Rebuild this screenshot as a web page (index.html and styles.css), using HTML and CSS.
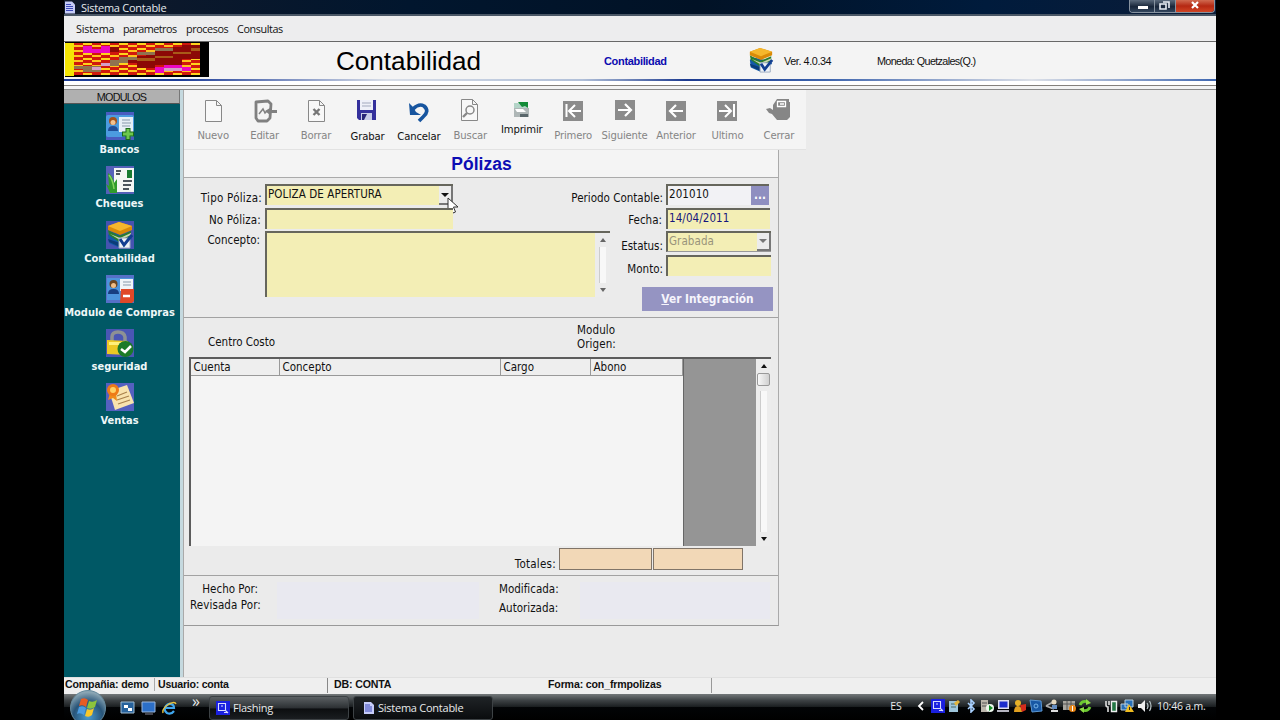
FILE: index.html
```html
<!DOCTYPE html>
<html lang="es">
<head>
<meta charset="utf-8">
<title>Sistema Contable</title>
<link rel="stylesheet" href="styles.css">
</head>
<body>
<svg class="defs" width="0" height="0">
  <defs>
    <pattern id="weave" width="18" height="5" patternUnits="userSpaceOnUse">
      <rect width="18" height="5" fill="#d0180c"/>
      <rect width="9" height="2" y="1" fill="#ffd21c"/>
      <rect x="9" width="9" height="2" y="3" fill="#ffc21c"/>
    </pattern>
    <symbol id="books" viewBox="0 0 28 28">
      <path d="M2 14l3-3 18 4 3 3-12 9L3 22z" fill="#1259a8"/>
      <path d="M2 18l12 4 11-7v3l-11 8L3 21z" fill="#0b3c78"/>
      <path d="M2 9l11 6 12-5v5l-12 6L3 14z" fill="#287c30"/>
      <path d="M4 13l10 4 11-5v2l-11 5z" fill="#cfd8b0"/>
      <path d="M2 5l11-4 13 4v4l-12 5L2 9z" fill="#d98a08"/>
      <path d="M2 5l11-4 13 4-12 5z" fill="#f5b72c"/>
      <path d="M13 17h11v10H13z" fill="#eef2f7" stroke="#9cabc0"/>
      <path d="M14 18l4 6 8-10" fill="none" stroke="#123f91" stroke-width="3"/>
    </symbol>
    <symbol id="doc" viewBox="0 0 12 12">
      <path d="M1 0h7l3 3v9H1z" fill="#c6ccf8"/>
      <path d="M2 3h5M2 5h7M2 7h7M2 9h7" stroke="#3c48b8"/>
    </symbol>
    <symbol id="flash" viewBox="0 0 14 14">
      <path d="M0 0h14v14H0z" fill="#1a20e0"/>
      <path d="M2.500 2.500h7v7h-7zM9 9l3 3M8 11.500h4M5 5h2" fill="none" stroke="#d8dcff" stroke-width="1.100"/>
    </symbol>
  </defs>
</svg>
<div class="screen">
  <header class="titlebar">
    <svg class="app-icon" width="12" height="13"><use href="#doc" width="12" height="13"/></svg>
    <span class="t-title">Sistema Contable</span>
    <div class="winbtns">
      <svg width="25" height="12" class="wb"><path d="M8 6h10v3H8z" fill="#fff"/></svg>
      <svg width="21" height="12" class="wb"><path d="M8 2h6v6M5 4h6v5H5z" fill="none" stroke="#e8edf4" stroke-width="1.600"/></svg>
      <svg width="38" height="12" class="wb close"><path d="M16 2l6 6M22 2l-6 6" stroke="#fff" stroke-width="2.200"/></svg>
    </div>
  </header>
  <nav class="menu"><span class="m1">Sistema</span><span class="m2">parametros</span><span class="m3">procesos</span><span class="m4">Consultas</span></nav>
  <section class="banner">
    <svg class="logo" width="144" height="35" shape-rendering="crispEdges">
      <path d="M0 0h144v35H0z" fill="#000"/>
      <path d="M0 1h9v33H0z" fill="#f4e404"/>
      <path d="M9 1h126v32H9z" fill="url(#weave)"/>
      <path d="M135 3v14h-18v6H90v3H72v-5h-9v-3h9v-4h9v-3h9V8h18V5h9V3z" fill="#8c0806"/>
      <path d="M9 24h18v3H9zM18 27h18v3H18zM27 24h9v3h-9zM36 21h18v3H36zM45 18h18v3H45zM54 15h18v3H54zM72 10h18v3H72zM90 6h18v3H90z" fill="#8f7350"/>
      <path d="M108 12h18V9h9V6h-9v4h-18v4H90v2H72v3h18v-3h18z" fill="#a85a18"/>
      <path d="M18 4h9v7h-9zM27 7h9v4h-9zM36 4h9v7h-9zM90 25h9v6h-9zM99 23h18v3H99zM117 25h9v4h-9z" fill="#ec08c0"/>
      <path d="M45 5h9v5h-9z" fill="#8c0806"/>
      <path d="M99 26h18v3H99zM36 21h9v3h-9zM27 25h9v3h-9z" fill="#d4a0c8"/>
    </svg>
    <span class="app-name">Contabilidad</span>
    <span class="module">Contabilidad</span>
    <svg class="banner-icon" width="26" height="28"><use href="#books" width="26" height="28"/></svg>
    <span class="ver">Ver. 4.0.34</span>
    <span class="coin">Moneda: Quetzales(Q.)</span>
  </section>
  <div class="rule"></div>
  <main class="main">
    <aside class="side">
      <div class="side-head">MODULOS</div>
      <div class="side-list">
        <div class="mod">
          <svg width="28" height="28" viewBox="0 0 28 28"><path d="M0 0h28v28H0z" fill="#4a5cc0"/><rect y="3" width="28" height="22" rx="2" fill="#4c9be0"/><path d="M13 5h14v15H13z" fill="#e6eff6"/><path d="M16 8h8M16 11h9M16 14h8" stroke="#8899ab"/><circle cx="7" cy="9" r="4" fill="#a4531c"/><circle cx="7" cy="10.500" r="2.500" fill="#f2c391"/><path d="M2 19q0-5 5-5t5 5z" fill="#204e98"/><path d="M22 16v12M16 22h12" stroke="#1a6a18" stroke-width="5"/><path d="M22 17v10M17 22h10" stroke="#6dc84c" stroke-width="3"/></svg>
          <span>Bancos</span></div>
        <div class="mod">
          <svg width="28" height="28" viewBox="0 0 28 28"><path d="M0 0h28v28H0z" fill="#5560b8"/><path d="M8 2h20v24H8z" fill="#f4f6f4"/><path d="M21 4h5v8h-5z" fill="#187a30"/><path d="M10 5h5M10 8h4M17 15h9M17 19h8M17 23h6" stroke="#4c555c" stroke-width="1.800"/><path d="M2 7q5 3 6 10l3-4v14H4L0 18l3 2z" fill="#319b2c"/><path d="M3 9q4 5 5 14" fill="none" stroke="#83d35c" stroke-width="1.500"/></svg>
          <span>Cheques</span></div>
        <div class="mod">
          <svg width="28" height="28" viewBox="0 0 28 28"><path d="M0 0h28v28H0z" fill="#4653b0"/><use href="#books" width="28" height="28"/></svg>
          <span>Contabilidad</span></div>
        <div class="mod">
          <svg width="28" height="28" viewBox="0 0 28 28"><path d="M0 0h28v28H0z" fill="#5570c8"/><path d="M1 3h26v22H1z" fill="#4c94dc"/><path d="M14 4h13v12H14z" fill="#f0f4f8"/><path d="M17 7h8M17 10h8" stroke="#8899ab"/><circle cx="7.500" cy="9" r="4" fill="#6c4520"/><circle cx="7.500" cy="10.500" r="2.500" fill="#f0bd86"/><path d="M2 19q0-5 5.500-5t5.500 5z" fill="#173e80"/><path d="M15 14h13v12l-2 2H14z" fill="#e04828"/><path d="M17 21h7" stroke="#fff" stroke-width="2.500"/></svg>
          <span>Modulo de Compras</span></div>
        <div class="mod">
          <svg width="28" height="28" viewBox="0 0 28 28"><path d="M0 0h28v28H0z" fill="#4a56b4"/><path d="M6 14V8q0-5 6-5t7 5v6" fill="none" stroke="#8d9194" stroke-width="3.500"/><path d="M1 11l21 1v14L1 25z" fill="#ecc824"/><path d="M3 13h12v3H3z" fill="#fff07a"/><circle cx="19.500" cy="20" r="8" fill="#1c7a28"/><path d="M15 20l4 3 6-6" fill="none" stroke="#fff" stroke-width="2.500"/></svg>
          <span>seguridad</span></div>
        <div class="mod">
          <svg width="28" height="28" viewBox="0 0 28 28"><path d="M0 0h28v28H0z" fill="#5560c0"/><path d="M3 8l18-6 7 18-19 7z" fill="#f8e3ae"/><path d="M11 13l10-4M11 17l12-4M12 21l12-4" stroke="#a9824c" stroke-width="1.300"/><path d="M4 10L2 17l5-2 4 3-1-8z" fill="#ef8b1c"/><circle cx="7" cy="7" r="6" fill="#ee7a18"/><circle cx="7" cy="7" r="3" fill="#ffd166"/></svg>
          <span>Ventas</span></div>
      </div>
    </aside>
    <div class="work">
      <div class="toolbar">
        <div class="tool"><svg width="28" height="28" viewBox="0 0 28 28"><path d="M6.500 3.500h11l5 5v16h-16zM17.500 3.500v5h5" fill="#f8f8f8" stroke="#888"/></svg><span>Nuevo</span></div>
        <div class="tool"><svg width="28" height="28" viewBox="0 0 28 28"><path d="M5 5l12-1 3 3-1 14-3 3H7l-2-3z" fill="none" stroke="#808080" stroke-width="2.800" stroke-linejoin="round"/><path d="M8 17l4-5 2 4 2-2" fill="none" stroke="#808080" stroke-width="1.500"/><path d="M14 14l5-3v2h7v3h-7v2z" fill="#808080"/></svg><span>Editar</span></div>
        <div class="tool"><svg width="28" height="28" viewBox="0 0 28 28"><path d="M6.500 3.500h11l5 5v16h-16zM17.500 3.500v5h5" fill="#f8f8f8" stroke="#888"/><path d="M11.500 12l6 6M17.500 12l-6 6" stroke="#777" stroke-width="2.400"/></svg><span>Borrar</span></div>
        <div class="tool on low"><svg width="28" height="28" viewBox="0 0 28 28"><path d="M4 3h19v20H6l-2-2z" fill="#34309c"/><path d="M7 3h13v10H7z" fill="#eef0f8"/><path d="M9 6h9M9 9h9" stroke="#a2a9bd"/><path d="M8 16h11v7H8z" fill="#c8cce8"/><path d="M9 17h5l-3 6H9z" fill="#262377"/></svg><span>Grabar</span></div>
        <div class="tool on low"><svg width="28" height="28" viewBox="0 0 28 28"><path d="M8 12q6-6 11-3 6 5-1 11l-4 4" fill="none" stroke="#17559f" stroke-width="3.600"/><path d="M4 6l1 12h11l-5-3-3-5z" fill="#17559f"/></svg><span>Cancelar</span></div>
        <div class="tool"><svg width="28" height="28" viewBox="0 0 28 28"><path d="M5.500 2.500h11l5 5v16h-16zM16.500 2.500v5h5" fill="#f8f8f8" stroke="#888"/><circle cx="14" cy="13" r="4" fill="none" stroke="#888" stroke-width="1.500"/><path d="M11 16l-4 4" stroke="#888" stroke-width="2.400"/></svg><span>Buscar</span></div>
        <div class="tool on print"><svg width="28" height="28" viewBox="0 0 28 28"><path d="M6 6h13v6H6z" fill="#b4d4c8"/><path d="M10 5h10v6l-3-2-3 1z" fill="#138b38"/><path d="M6 11h15v9H6z" fill="#aeb6b6"/><path d="M7 12h8l3 3H9z" fill="#fff"/><path d="M12 17h8v3h-8z" fill="#59666a"/></svg><span>Imprimir</span></div>
        <div class="tool"><svg width="28" height="28" viewBox="0 0 28 28"><path d="M4 4h20v20H4z" fill="#8b8b8b"/><path d="M7.500 7v13M22 14H11M16 8l-6 6 6 6" fill="none" stroke="#fff" stroke-width="2"/></svg><span>Primero</span></div>
        <div class="tool"><svg width="28" height="28" viewBox="0 0 28 28"><path d="M4 3h20v20H4z" fill="#8b8b8b"/><path d="M7 13h12M14 7l6 6-6 6" fill="none" stroke="#fff" stroke-width="2.200"/></svg><span>Siguiente</span></div>
        <div class="tool"><svg width="28" height="28" viewBox="0 0 28 28"><path d="M4 4h20v20H4z" fill="#8b8b8b"/><path d="M21 14H9M14 8l-6 6 6 6" fill="none" stroke="#fff" stroke-width="2.200"/></svg><span>Anterior</span></div>
        <div class="tool"><svg width="28" height="28" viewBox="0 0 28 28"><path d="M4 4h20v20H4z" fill="#8b8b8b"/><path d="M21 7v13M6 14h11M12 8l6 6-6 6" fill="none" stroke="#fff" stroke-width="2"/></svg><span>Ultimo</span></div>
        <div class="tool"><svg width="28" height="28" viewBox="0 0 28 28"><path d="M1 12l4-1 3 2V8l4-6h12v3h1v15l-3 3H12l-5-6-3-1z" fill="#868686"/><path d="M12.500 4.500h8v5h-8zM15 7h4" fill="none" stroke="#fff" stroke-width="1.300"/></svg><span>Cerrar</span></div>
      </div>
      <div class="form">
        <h1 class="form-title">Pólizas</h1>
        <div class="fields">
          <label class="l-tipo">Tipo Póliza:</label>
          <div class="inp tipo"><span>POLIZA DE APERTURA</span><i class="drop"></i>
            <svg class="cursor" width="12" height="18" viewBox="0 0 12 18"><path d="M1 1v13l3-3 2 5 2.500-1L6.500 10H11z" fill="#fff" stroke="#333"/></svg>
          </div>
          <label class="l-no">No Póliza:</label>
          <div class="inp no"></div>
          <label class="l-con">Concepto:</label>
          <div class="inp con"><div class="sbar"><i class="up"></i><b></b><i class="down"></i></div></div>
          <label class="l-per">Periodo Contable:</label>
          <div class="inp per"><span>201010</span><i class="dots">...</i></div>
          <label class="l-fec">Fecha:</label>
          <div class="inp fec"><span>14/04/2011</span></div>
          <label class="l-est">Estatus:</label>
          <div class="inp est"><span>Grabada</span><i class="drop"></i></div>
          <label class="l-mon">Monto:</label>
          <div class="inp mon"></div>
          <button class="ver-int"><u>V</u>er Integración</button>
        </div>
        <div class="detail">
          <div class="detail-head"><span class="cc">Centro Costo</span><span class="mo">Modulo<br>Origen:</span></div>
          <div class="grid">
            <div class="sheet">
              <div class="cols"><span>Cuenta</span><span>Concepto</span><span>Cargo</span><span>Abono</span></div>
            </div>
            <div class="void"></div>
            <div class="sbar big"><i class="up"></i><em></em><b></b><i class="down"></i></div>
          </div>
          <div class="totals"><span>Totales:</span><div class="tot"></div><div class="tot t2"></div></div>
        </div>
        <div class="sign">
          <span class="s1">Hecho Por:</span><div class="v1"></div><span class="s2">Modificada:</span><div class="v2"></div>
          <span class="s3">Revisada Por:</span><span class="s4">Autorizada:</span>
        </div>
      </div>
    </div>
  </main>
  <div class="status"><span class="st1">Compañia: demo</span><span class="st2">Usuario: conta</span><span class="st3">DB: CONTA</span><span class="st4">Forma: con_frmpolizas</span></div>
  <footer class="taskbar">
    <svg class="orb" width="38" height="32" viewBox="0 0 38 32">
      <defs><radialGradient id="orbfill" cx=".5" cy=".75" r=".7"><stop offset="0" stop-color="#4a9cd0"/><stop offset=".6" stop-color="#285478"/><stop offset="1" stop-color="#8ba6b4"/></radialGradient></defs>
      <circle cx="19" cy="18" r="17.500" fill="url(#orbfill)" stroke="#65899c"/>
      <path d="M12 9q4-2 7 1l-2 7q-3-3-7-1z" fill="#e85c24"/><path d="M20 11q4 2 8-1l-2 7q-4 3-8 1z" fill="#8cc43c"/>
      <path d="M10 17q4-2 7 1l-2 7q-4-3-7-1z" fill="#4c9be0"/><path d="M18 19q4 2 7-1l-2 7q-3 3-7 1z" fill="#fac829"/>
    </svg>
    <div class="quick">
      <svg width="15" height="14"><path d="M1 1h13v11H1z" fill="#27629c" stroke="#a0bdd4"/><path d="M4 4h4v3H4zM8 7h4v3H8z" fill="#fff"/></svg>
      <svg width="15" height="14"><path d="M1 1h13v10H1z" fill="#2c6fc8" stroke="#9cb8dc"/><path d="M4 13h8" stroke="#889"/></svg>
      <svg width="15" height="14"><path d="M12 10q-3 4-7 2-4-3-1-7 3-4 7-1 1 1 1 3H4" fill="none" stroke="#40a7ee" stroke-width="2.200"/><path d="M1 12Q0 7 7 3q6-3 7 0" fill="none" stroke="#e9c23e" stroke-width="1.400"/></svg>
    </div>
    <span class="more">»</span>
    <div class="task"><svg width="14" height="14"><use href="#flash" width="14" height="14"/></svg><span class="tk1">Flashing</span></div>
    <div class="task active"><svg width="12" height="14"><use href="#doc" width="12" height="14"/></svg><span class="tk2">Sistema Contable</span></div>
    <div class="tray">
      <span class="lang">ES</span>
      <svg class="chev" width="8" height="10"><path d="M6 1L2 5l4 4" fill="none" stroke="#fff" stroke-width="1.800"/></svg>
      <svg width="14" height="14"><use href="#flash" width="14" height="14"/></svg>
      <svg width="14" height="14"><path d="M2 2h9v11H2z" fill="#9ec6dc"/><path d="M4 5h5M4 8h5" stroke="#466"/><path d="M7 4l4-3 2 2-4 4z" fill="#e2b53c"/></svg>
      <svg width="14" height="14"><path d="M4 4l6 6-3 3V1l3 3-6 6" fill="none" stroke="#a8d0ff" stroke-width="1.600"/></svg>
      <svg width="14" height="14"><path d="M1 1h7v12H1z" fill="#bbb5ab"/><path d="M2 4h5M2 7h5" stroke="#555"/><circle cx="10" cy="9" r="4" fill="#eef8ee"/><path d="M9 6l4 3-4 3z" fill="#168c28"/></svg>
      <svg width="14" height="14"><path d="M2 1h11v9H2z" fill="#dde"/><path d="M3.500 2.500h8v6h-8z" fill="#1c2ccc"/><path d="M1 11h12v2H1z" fill="#b5b5c0"/></svg>
      <svg width="14" height="14"><path d="M1 13q0-6 4-6t4 6z" fill="#e0a020"/><circle cx="5" cy="4" r="3" fill="#e6b128"/><path d="M7 6l6-1v6l-4 2z" fill="#d42c1c"/></svg>
      <svg width="14" height="14"><path d="M1 1l11 1 1 10-10 1z" fill="#1858a4" stroke="#5c98d4"/><circle cx="7" cy="7" r="2" fill="none" stroke="#75b4e8"/></svg>
      <svg width="14" height="14"><path d="M1 7l7-4M1 7l8 3" stroke="#aaa" stroke-width="1.800"/><circle cx="9" cy="3" r="2.500" fill="#e6d9c0"/><path d="M7 6h5v4H7z" fill="#648cc0"/><path d="M6 12h7" stroke="#ddd" stroke-width="2"/></svg>
      <svg width="14" height="14"><path d="M1 2h12v9H1z" fill="#a8a59f"/><path d="M1 5h12M5 2v9M9 2v9" stroke="#555"/><circle cx="10.500" cy="9.500" r="3.500" fill="#e88414"/><path d="M10.500 7v5" stroke="#fff"/></svg>
      <svg width="14" height="14"><path d="M2 6q2-5 8-3M12 8q-2 5-8 3" fill="none" stroke="#6cc832" stroke-width="2.800"/><path d="M8 0l5 4-5 2zM6 14l-5-4 5-2z" fill="#8edc45"/></svg>
      <svg class="gap" width="14" height="14"><path d="M2 2v4q0 2 2 2v5M5 2v4" fill="none" stroke="#ddd" stroke-width="1.600"/><path d="M7.500 2.500h5v10h-5z" fill="#274" stroke="#eee" stroke-width="1.400"/></svg>
      <svg width="14" height="14"><path d="M5 1h8v7H5zM1 5h7v6H1z" fill="#276fb8" stroke="#b8cedd"/><path d="M9 5l5 8H5z" fill="#f0bd20"/><path d="M9.500 8v3" stroke="#222"/></svg>
      <svg width="16" height="14"><path d="M1 5h3l4-4v12L4 9H1z" fill="#eee"/><path d="M10 4q2 3 0 6M12.500 2q3 5 0 10" fill="none" stroke="#b8c4c8" stroke-width="1.200"/></svg>
      <span class="clock">10:46 a.m.</span>
    </div>
  </footer>
</div>
</body>
</html>
```
FILE: styles.css
```css
* { box-sizing: border-box; }
body { margin: 0; background: #000; overflow: hidden; }
.defs { position: absolute; }
svg { display: block; flex: none; }
.screen {
  width: 1152px; height: 720px; margin-left: 64px;
  display: flex; flex-direction: column;
  background: #ebebeb; color: #111;
  font: 11.500px/14px "DejaVu Sans Condensed", "DejaVu Sans", sans-serif;
  font-stretch: condensed;
  white-space: nowrap; overflow: hidden;
}
.titlebar {
  flex: none; height: 16px; display: flex; align-items: flex-start;
  background: linear-gradient(90deg, #10192a, #01162e 30%, #011226 55%, #001b3c 80%, #0a1c38);
  border-bottom: 2px solid #4a5766; color: #e6eaee;
}
.app-icon { margin: 1px 0 0 0; }
.t-title { margin-left: 5px; font: 11px/15px "Open Sans", sans-serif; letter-spacing: -.25px; }
.winbtns { margin-left: auto; margin-right: 1px; display: flex; border: 1px solid #8793a0; border-top: 0; border-radius: 0 0 4px 4px; overflow: hidden; }
.wb { background: linear-gradient(#5b6a7c, #18263a 55%, #33465d); border-right: 1px solid #8793a0; }
.wb.close { background: linear-gradient(#d06a50, #b52812 50%, #d04524); border: 0; }
.menu {
  flex: none; height: 26px; display: flex; padding: 5px 0 0 12px; background: #ededee;
  border-bottom: 1px solid #686868; font: 10.800px/16px "Open Sans", sans-serif; letter-spacing: -.4px;
}
.m1 { width: 47px; letter-spacing: -.2px; } .m2 { width: 63px; letter-spacing: -.55px; } .m3 { width: 51px; }
.banner { flex: none; height: 36px; display: flex; background: #f4f4f4; align-items: flex-start; }
.logo { margin-left: 1px; width: 144px; }
.app-name { margin: 2px 0 0 127px; width: 268px; font: 26.100px/34px "Liberation Sans", sans-serif; color: #000; }
.module { margin-top: 12px; width: 144px; font: bold 11px/14px "Liberation Sans", sans-serif; letter-spacing: -.33px; color: #0b0bb0; }
.banner-icon { margin-top: 4px; }
.ver { margin: 12px 0 0 10px; width: 93px; font: 10.800px/14px "Liberation Sans", sans-serif; letter-spacing: -.4px; }
.coin { margin-top: 12px; font: 10.800px/14px "Liberation Sans", sans-serif; letter-spacing: -.65px; }
.rule {
  flex: none; height: 12px; border-bottom: 1px solid #8a8a8a;
  background:
    linear-gradient(#84807c, #84807c) 0 7px / 100% 1px no-repeat,
    linear-gradient(#fff, #fff) 0 3px / 100% 4px no-repeat,
    linear-gradient(90deg, #1c3c98, #1c3c98 10%, #d8dee8 28%, #b0bfd8 45%, #1d3b90 54%, #3b62ac 66%, #dce0e8 84%, #3f67b0) 0 1px / 100% 2px no-repeat,
    #f4f4f4;
}
.main { flex: 1; display: flex; min-height: 0; }
.side { width: 116px; display: flex; flex-direction: column; }
.side-head { height: 14px; background: #b0b0b0; border-bottom: 1px solid #555; border-right: 1px solid #777; text-align: center; font: 10.800px/14px "Liberation Sans", sans-serif; letter-spacing: -.7px; }
.side-list { flex: 1; background: #005865; padding-top: 8px; }
.mod { height: 54.250px; display: flex; flex-direction: column; align-items: center; width: 111px; }
.mod span { margin-top: 3px; color: #eef7f8; font-weight: bold; font-size: 11px; line-height: 14px; }
.work { flex: 1; border-left: 3px solid #c5d9df; margin-left: 0; box-shadow: inset 1px 0 #aaa; padding-left: 1px; }
.toolbar { width: 622px; height: 60px; background: #f4f4f4; display: flex; padding-left: 3.500px; border-bottom: 1px solid #e2e2e2; }
.tool { width: 51.430px; flex: none; display: flex; flex-direction: column; align-items: center; padding-top: 7px; color: #858585; }
.tool span { margin-top: 4px; font-size: 11.200px; letter-spacing: -.15px; }
.tool.on { color: #111; }
.tool.low span { margin-top: 5px; }
.tool.print span { margin-top: -2px; }
.form { width: 595px; height: 476px; border-right: 1px solid #aaa; border-bottom: 1px solid #999; }
.form-title { margin: 0; padding-left: 1px; height: 28px; background: #f4f4f4; border-bottom: 1px solid #aaa; text-align: center; font: bold 17.500px/28px "Liberation Sans", sans-serif; color: #0c0cb4; }
.fields {
  height: 140px; padding-top: 6px; border-bottom: 1px solid #a2a2a2; display: grid;
  grid-template-columns: 81px 188px 157px 56px 107px;
  grid-template-rows: 24px 23px 24px 32px 24px;
}
.fields label { justify-self: end; padding-right: 3px; }
.inp { height: 21px; background: #f3eeb5; border: solid #66665c; border-width: 2px 0 0 2px; display: flex; align-items: stretch; position: relative; }
.inp span { line-height: 17px; padding-left: 1px; flex: 1; letter-spacing: .08px; }
.l-tipo { grid-area: 1 / 1; margin-top: 7px; letter-spacing: .25px; }
.tipo { grid-area: 1 / 2; }
.drop { width: 14px; background: #ececec; border: solid #777; border-width: 0 2px 2px 0; display: flex; align-items: center; justify-content: center; }
.drop::after, .up::after, .down::after { content: ""; border: 4px solid transparent; border-top-color: #111; border-bottom: 0; }
.cursor { position: absolute; left: 180px; top: 11px; }
.l-no { grid-area: 2 / 1; margin: 5px 1px 0 0; letter-spacing: .15px; }
.no { grid-area: 2 / 2; }
.l-con { grid-area: 3 / 1; margin: 2px 2px 0 0; }
.con { grid-area: 3 / 2 / 6 / 4; height: 66px; justify-content: flex-end; }
.sbar { width: 15px; background: #ececec; display: flex; flex-direction: column; align-items: center; justify-content: space-between; padding: 5px 0; }
.sbar b { width: 7px; flex: 1; margin: 5px 0; background: #f8f8f8; border-left: 1px solid #ccc; }
.up, .down { display: flex; }
.up::after { transform: rotate(180deg); }
.sbar i::after { border-width: 4px 3px 0; }
.con .sbar i::after { border-top-color: #666; }
.l-per { grid-area: 1 / 3 / 2 / 5; margin-top: 7px; }
.per { grid-area: 1 / 5; width: 103px; background: #f2f2f5; }
.dots { width: 18px; background: #8f8fc0; color: #fff; font-style: normal; font-weight: bold; text-align: center; line-height: 18px; }
.l-fec { grid-area: 2 / 3 / 3 / 5; margin: 5px 1px 0 0; }
.fec { grid-area: 2 / 5; width: 104px; color: #15157d; }
.l-est { grid-area: 3 / 3 / 4 / 5; margin-top: 8px; }
.est { grid-area: 3 / 5; width: 105px; color: #99947a; border-bottom: 1px solid #999; }
.est .drop::after { border-top-color: #777; }
.l-mon { grid-area: 4 / 3 / 5 / 5; margin-top: 7px; }
.mon { grid-area: 4 / 5; width: 105px; }
.ver-int { grid-area: 5 / 3 / 6 / 6; justify-self: end; margin: 0; width: 131px; height: 24px; padding: 0; border: 0; background: #9594c2; color: #f6f5fc; font: bold 11.800px/24px "DejaVu Sans Condensed", "DejaVu Sans", sans-serif; }
.detail { height: 258px; border-bottom: 1px solid #a2a2a2; }
.detail-head { height: 39px; display: flex; }
.cc { margin: 17px 0 0 24px; width: 369px; }
.mo { margin-top: 5px; line-height: 14px; letter-spacing: .1px; }
.grid { height: 189px; margin: 0 7px 0 5px; border: solid #5c5c5c; border-width: 2px 0 0 2px; display: flex; }
.sheet { width: 492px; background: #f4f4f4; }
.cols { height: 17px; background: #eeeeee; border-bottom: 1px solid #999; display: grid; grid-template-columns: 89px 221px 90px 92px; line-height: 16px; }
.cols span { border-right: 1px solid #999; padding-left: 2.500px; }
.void { width: 75px; background: #959595; border-left: 1px solid #666; }
.big { width: 15px; }
.big em { width: 13px; height: 13px; flex: none; margin-top: 5px; background: linear-gradient(90deg, #f8f8f8, #d0d0d0); border: 1px solid #999; border-radius: 2px; }
.totals { display: flex; justify-content: flex-end; padding: 1px 35px 0 0; height: 28px; }
.totals span { margin: 10px 3px 0 0; letter-spacing: .25px; }
.tot { width: 93px; height: 22px; margin-top: 1px; border: 1px solid #807468; background: #f2d8b7; }
.t2 { margin-left: 1px; width: 90px; }
.sign { display: grid; grid-template-columns: 81px 234px 65px 1fr; grid-template-rows: 16px 24px; padding-top: 6px; }
.s1 { grid-area: 1 / 1; justify-self: end; padding-right: 7px; } .s2 { grid-area: 1 / 3; }
.s3 { grid-area: 2 / 1; padding-left: 6px; letter-spacing: .1px; } .s4 { grid-area: 2 / 3; margin-top: 3px; }
.v1 { grid-area: 1 / 2 / 3 / 3; margin: 0 20px 3px 12px; background: #e9e9f0; }
.v2 { grid-area: 1 / 4 / 3 / 5; margin: 0 8px 3px 16px; background: #e9e9f0; }
.status { flex: none; height: 17px; display: flex; background: #efefef; font: bold 10.600px/12px "Liberation Sans", sans-serif; letter-spacing: -.15px; border-top: 1px solid #e0e0e0; }
.st1 { width: 91px; padding-left: 1px; border-right: 1px solid #aaa; height: 13px; }
.st2 { width: 173px; padding-left: 3px; border-right: 1px solid #888; height: 15px; letter-spacing: -.25px; }
.st3 { width: 220px; padding-left: 6px; }
.st4 { width: 164px; border-right: 1px solid #999; height: 15px; }
.taskbar { flex: none; height: 26px; display: flex; align-items: flex-start; background: linear-gradient(#74797b, #3c4144 25%, #1c2022 48%, #020406 52%, #000 100%); font-family: "Open Sans", sans-serif; font-stretch: normal; color: #e8eaeb; }
.orb { margin: -4px 0 0 5px; }
.quick { display: flex; gap: 6px; margin: 7px 0 0 13px; }
.more { margin: 0 0 0 15px; width: 17px; font-size: 16px; line-height: 14px; }
.task { width: 140px; height: 24px; margin-top: 2px; display: flex; align-items: center; gap: 3px; padding: 0 0 0 6px; border: 1px solid #3d4245; border-radius: 3px; background: linear-gradient(#5b6063, #2c3033 50%, #0c0e10 54%, #1a1d20); font-size: 11px; letter-spacing: -.25px; }
.task.active { margin-left: 4px; padding-left: 9px; background: linear-gradient(#1f2326, #0a0c0e); }
.tray { margin-left: auto; display: flex; gap: 2.300px; padding: 5px 11px 0 0; align-items: center; font-size: 10.500px; letter-spacing: -.2px; }
.lang { margin-right: 13px; }
.chev { margin-right: 4px; }
.gap { margin-left: 10px; }
.clock { margin-left: 2px; width: 48px; }
```
